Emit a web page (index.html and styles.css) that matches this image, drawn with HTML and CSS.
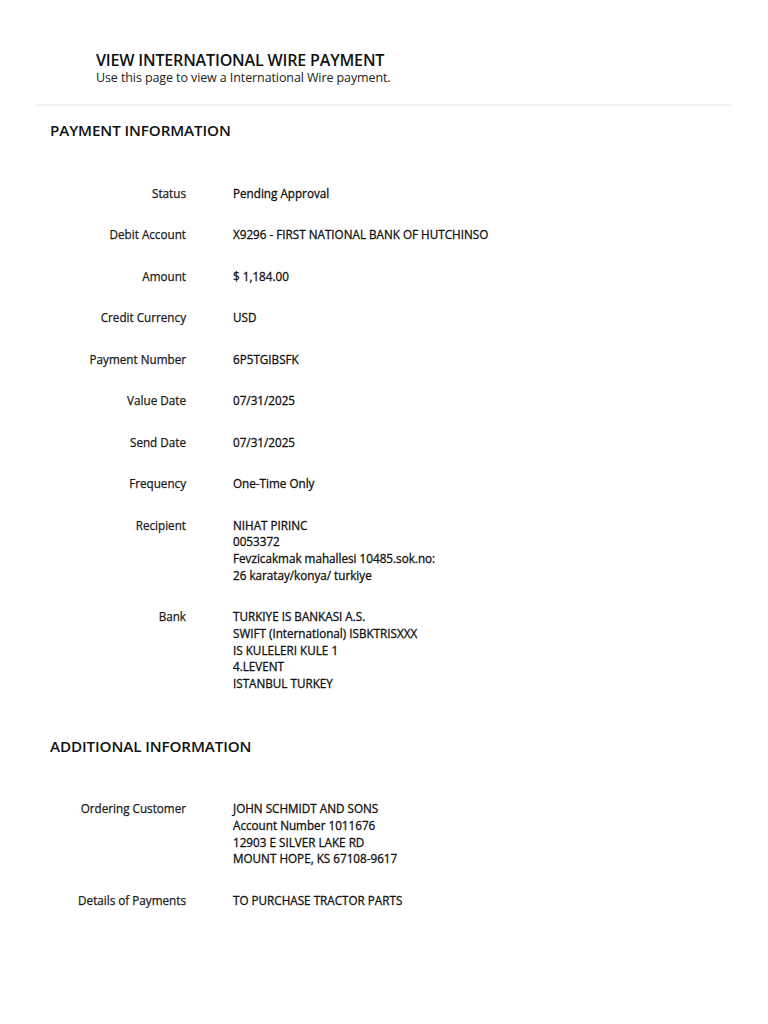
FILE: index.html
```html
<!DOCTYPE html>
<html>
<head>
<meta charset="utf-8">
<link rel="stylesheet" href="styles.css">
</head>
<body>
<div class="page">
  <header class="page-header">
    <h1 class="page-title">VIEW INTERNATIONAL WIRE PAYMENT</h1>
    <p class="page-sub">Use this page to view a International Wire payment.</p>
  </header>
  <hr class="divider">
  <section class="section">
    <h2 class="section-title">PAYMENT INFORMATION</h2>
    <div class="rows">
      <div class="row"><div class="label">Status</div><div class="value">Pending Approval</div></div>
      <div class="row"><div class="label">Debit Account</div><div class="value">X9296 - FIRST NATIONAL BANK OF HUTCHINSO</div></div>
      <div class="row"><div class="label">Amount</div><div class="value">$ 1,184.00</div></div>
      <div class="row"><div class="label">Credit Currency</div><div class="value">USD</div></div>
      <div class="row"><div class="label">Payment Number</div><div class="value">6P5TGIBSFK</div></div>
      <div class="row"><div class="label">Value Date</div><div class="value">07/31/2025</div></div>
      <div class="row"><div class="label">Send Date</div><div class="value">07/31/2025</div></div>
      <div class="row"><div class="label">Frequency</div><div class="value">One-Time Only</div></div>
      <div class="row"><div class="label">Recipient</div><div class="value">NIHAT PIRINC<br>0053372<br>Fevzicakmak mahallesi 10485.sok.no:<br>26 karatay/konya/ turkiye</div></div>
      <div class="row"><div class="label">Bank</div><div class="value">TURKIYE IS BANKASI A.S.<br>SWIFT (International) ISBKTRISXXX<br>IS KULELERI KULE 1<br>4.LEVENT<br>ISTANBUL TURKEY</div></div>
    </div>
  </section>
  <section class="section section-additional">
    <h2 class="section-title">ADDITIONAL INFORMATION</h2>
    <div class="rows">
      <div class="row"><div class="label">Ordering Customer</div><div class="value">JOHN SCHMIDT AND SONS<br>Account Number 1011676<br>12903 E SILVER LAKE RD<br>MOUNT HOPE, KS 67108-9617</div></div>
      <div class="row"><div class="label">Details of Payments</div><div class="value">TO PURCHASE TRACTOR PARTS</div></div>
    </div>
  </section>
</div>
</body>
</html>
```

FILE: styles.css
```css
html, body {
  margin: 0;
  padding: 0;
  background: #ffffff;
}
body {
  font-family: "Open Sans", "Liberation Sans", sans-serif;
  color: #1f1f1f;
}
.page {
  width: 768px;
}
.page-header {
  padding: 50px 0 0 96px;
}
.page-title {
  margin: 0;
  font-size: 16.1px;
  line-height: 20px;
  font-weight: 600;
  letter-spacing: -0.2px;
  color: #111;
}
.page-sub {
  margin: 0;
  font-size: 12.5px;
  line-height: 16px;
  font-weight: 400;
  letter-spacing: -0.1px;
  color: #222;
}
.divider {
  margin: 18px 36px 0 35px;
  border: 0;
  height: 2px;
  background: #f3f3f3;
}
.section {
  padding-left: 50px;
}
.section-title {
  margin: 14px 0 0 0;
  font-size: 15.2px;
  line-height: 20px;
  font-weight: 600;
  letter-spacing: -0.1px;
  color: #111;
}
.section-additional .section-title {
  margin-top: 44px;
}
.rows {
  margin-top: 44.5px;
  display: flex;
  flex-direction: column;
  gap: 24.8px;
}
.row {
  display: grid;
  grid-template-columns: 136px 1fr;
  column-gap: 47px;
  font-size: 11.7px;
  line-height: 16.7px;
}
.label {
  text-align: right;
  font-weight: 400;
  color: #1a1a1a;
  -webkit-text-stroke: 0.25px #1a1a1a;
}
.value {
  font-weight: 400;
  color: #111;
  -webkit-text-stroke: 0.3px #111;
}
```
